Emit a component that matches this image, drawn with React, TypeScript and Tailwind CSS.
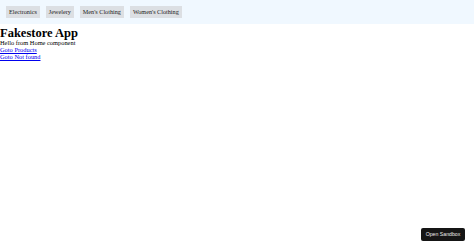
export default function App() {
  const cats = ["Electronics", "Jewelery", "Men's Clothing", "Women's Clothing"];
  return (
    <div className="relative h-[248px] w-[474px] overflow-hidden bg-white font-['Liberation_Serif',serif] text-black">
      <nav className="flex h-[24px] items-start gap-[6px] bg-[#f0f8ff] px-[6px] pt-[6px]">
        {cats.map((c) => (
          <button
            key={c}
            className="h-[12px] bg-[#dcdfe3] px-[3px] text-[6.2px] leading-[12px] text-[#222]"
          >
            {c}
          </button>
        ))}
      </nav>
      <h1 className="mt-[2.5px] text-[12.5px] font-bold leading-[12.5px]">Fakestore App</h1>
      <div className="text-[6.4px] leading-[7px]">
        <p>Hello from Home component</p>
        <a href="#" className="block text-[#0000ee] underline">Goto Products</a>
        <a href="#" className="block text-[#0000ee] underline">Goto Not found</a>
      </div>
      <div className="absolute left-[421px] top-[228px] flex h-[13px] w-[44px] items-center justify-center rounded-[2px] bg-[#151515] font-['Liberation_Sans',sans-serif] text-[5.2px] text-[#eeeeee]">
        Open Sandbox
      </div>
    </div>
  );
}
